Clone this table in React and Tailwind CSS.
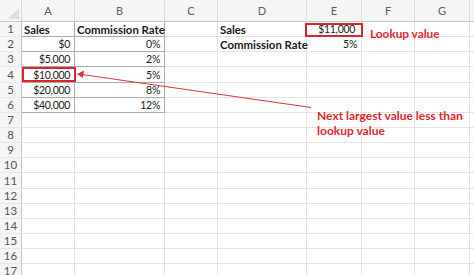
import React from 'react';

const COLS = [
  { key: 'A', w: 'w-[53px]' },
  { key: 'B', w: 'w-[90px]' },
  { key: 'C', w: 'w-[53px]' },
  { key: 'D', w: 'w-[89px]' },
  { key: 'E', w: 'w-[55px]' },
  { key: 'F', w: 'w-[53px]' },
  { key: 'G', w: 'w-[55px]' },
  { key: 'H', w: 'w-[60px]' },
];

// cell contents: [text, bold, alignLeft]
const DATA = {
  1: { A: ['Sales', true, true], B: ['Commission Rate', true, true], D: ['Sales', true, true], E: ['$11,000'] },
  2: { A: ['$0'], B: ['0%'], D: ['Commission Rate', true, true], E: ['5%'] },
  3: { A: ['$5,000'], B: ['2%'] },
  4: { A: ['$10,000'], B: ['5%'] },
  5: { A: ['$20,000'], B: ['8%'] },
  6: { A: ['$40,000'], B: ['12%'] },
};

const ROWS = Array.from({ length: 17 }, (_, i) => i + 1);

const Cell = ({ row, col }) => {
  const cell = DATA[row]?.[col.key];
  const inTable = row <= 6 && (col.key === 'A' || col.key === 'B');
  const bold = cell && cell[1];
  return (
    <div
      className={`${col.w} h-[15.15px] shrink-0 border-r border-b flex items-end leading-[13px] overflow-visible whitespace-nowrap ${
        inTable ? 'border-[#ababab]' : 'border-[#e3e3e3]'
      } ${cell && !cell[2] ? 'justify-end' : 'justify-start'} ${
        bold ? 'font-bold text-[11.4px] pl-[2px]' : 'text-[10.5px] tracking-[-0.3px] pr-[4px]'
      } ${row === 1 && col.key === 'E' ? 'pr-[6px]' : ''}`}
    >
      {cell ? cell[0] : ''}
    </div>
  );
};

export default function App() {
  return (
    <div className="relative w-[474px] h-[275px] overflow-hidden bg-white text-[#1a1a1a] font-['Lato',sans-serif]">
      {/* column headers */}
      <div className="flex h-[22px] bg-[#f5f5f5] border-b border-[#c6c6c6]">
        <div className="w-[22px] shrink-0 border-r border-[#d6d6d6] flex items-end justify-end p-[2px]">
          <div className="w-0 h-0 border-l-[11px] border-l-transparent border-b-[11px] border-b-[#dcdcdc]" />
        </div>
        {COLS.map(c => (
          <div
            key={c.key}
            className={`${c.w} shrink-0 border-r border-[#dedede] flex items-end justify-center pb-[2px] text-[11px] text-[#606060]`}
          >
            {c.key === 'H' ? '' : c.key}
          </div>
        ))}
      </div>

      {/* rows */}
      {ROWS.map(r => (
        <div key={r} className="flex">
          <div className="w-[22px] h-[15.15px] shrink-0 bg-[#f5f5f5] border-r border-b border-r-[#c6c6c6] border-b-[#e8e8e8] flex items-end pb-[1px] leading-[13px] justify-center text-[11.5px] text-[#555]">
            {r}
          </div>
          {COLS.map(c => (
            <Cell key={c.key} row={r} col={c} />
          ))}
        </div>
      ))}

      {/* red highlight boxes */}
      <div className="absolute left-[22px] top-[67px] w-[54px] h-[15px] border-2 border-[#d9262c]" />
      <div className="absolute left-[305px] top-[23px] w-[58px] h-[14px] border-2 border-[#d9262c]" />

      {/* arrow */}
      <svg className="absolute left-0 top-0" width="474" height="275">
        <line x1="311" y1="107.5" x2="82" y2="74.5" stroke="#e0303a" strokeWidth="1" />
        <polygon points="77,74 84,70.5 83,78" fill="#e0303a" />
      </svg>

      {/* callout texts */}
      <div className="absolute left-[370px] top-[26px] text-[11.8px] font-bold text-[#e3262e] leading-[15px]">
        Lookup value
      </div>
      <div className="absolute left-[317px] top-[108px] text-[12px] font-bold text-[#e3262e] leading-[15px]">
        Next largest value less than
        <br />
        lookup value
      </div>
    </div>
  );
}
